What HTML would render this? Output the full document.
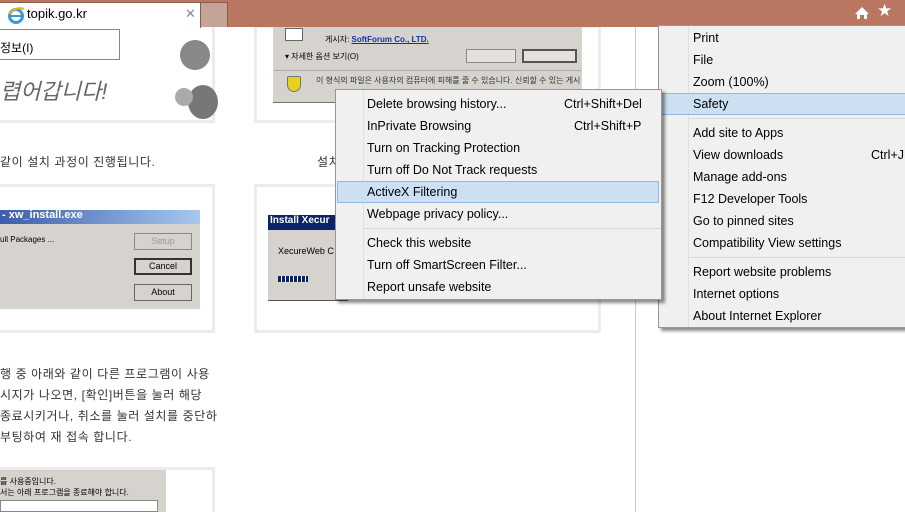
<!DOCTYPE html>
<html style="overflow:hidden;width:905px;height:512px"><head><meta charset="utf-8"><style>
*{margin:0;padding:0;box-sizing:border-box}
body{width:905px;height:512px;overflow:hidden;background:#fff;position:relative;font-family:"Segoe UI","Liberation Sans",sans-serif;font-size:12.5px;color:#000}
.a{position:absolute}
.k{font-family:"Liberation Sans","Noto Sans CJK KR",sans-serif}
.box{position:absolute;border:3px solid #ececec;background:#fff}
.menu{position:absolute;background:#f0f0f0;border:1px solid #979797;box-shadow:3px 3px 3px rgba(0,0,0,.45);z-index:20}
.it{position:absolute;left:0;right:0;height:22px;line-height:22px}
.sep{position:absolute;height:1px;background:#d7d7d7}
.hl{position:absolute;background:#cde0f3;border:1px solid #90b8e0}
.txt{font-size:12.5px;color:#333;line-height:21px;letter-spacing:0.6px}
.top{z-index:10}
</style></head><body>
<!-- content -->
<div class="box" style="left:-3px;top:-3px;width:218px;height:126px"></div>
<div class="a k" style="left:0;top:29px;width:120px;height:31px;border:1px solid #888;border-left:none;background:#fff;font-size:12px;padding:9px 0 0 0">정보(I)</div>
<div class="a k" style="left:0;top:74px;font-size:22px;color:#666;font-style:italic">렵어갑니다!</div>
<div class="a" style="left:180px;top:40px;width:30px;height:30px;border-radius:50%;background:#888"></div>
<div class="a" style="left:188px;top:85px;width:30px;height:34px;border-radius:50%;background:#777"></div>
<div class="a" style="left:175px;top:88px;width:18px;height:18px;border-radius:50%;background:#aaa"></div>
<div class="box" style="left:254px;top:25px;width:347px;height:98px"></div>
<div class="a" style="left:273px;top:27px;width:309px;height:76px;background:#d6d3ce;border-bottom:1px solid #777"></div>
<div class="a" style="left:285px;top:28px;width:18px;height:13px;background:#fff;border:1px solid #666"></div>
<div class="a k" style="left:325px;top:34px;font-size:8px">게시자: <span style="color:#13a;text-decoration:underline;font-weight:bold">SoftForum Co., LTD.</span></div>
<div class="a k" style="left:285px;top:51px;font-size:8px">▾ 자세한 옵션 보기(O)</div>
<div class="a" style="left:466px;top:49px;width:50px;height:14px;border:1px solid #888;background:#e4e1dc"></div>
<div class="a" style="left:522px;top:49px;width:55px;height:14px;border:2px solid #555;background:#e4e1dc"></div>
<div class="a" style="left:274px;top:70px;width:307px;height:1px;background:#aaa"></div>
<div class="a" style="left:287px;top:76px;width:14px;height:16px;background:#e8d020;border-radius:2px 2px 8px 8px;border:1px solid #776"></div>
<div class="a k" style="left:316px;top:75px;font-size:8px;color:#333">이 형식의 파일은 사용자의 컴퓨터에 피해를 줄 수 있습니다. 신뢰할 수 있는 게시</div>
<div class="a k txt" style="left:0;top:152px;font-size:12px">같이 설치 과정이 진행됩니다.</div>
<div class="a k txt" style="left:317px;top:152px;font-size:12px">설치</div>

<div class="box" style="left:-3px;top:184px;width:218px;height:149px"></div>
<div class="a" style="left:0;top:210px;width:200px;height:99px;background:#d6d3ce"></div>
<div class="a" style="left:0;top:210px;width:200px;height:14px;background:linear-gradient(90deg,#3a5ea8,#a8c8f0)"></div>
<div class="a" style="left:2px;top:209px;font-size:11px;color:#fff;font-weight:bold;font-family:'Liberation Sans'">- xw_install.exe</div>
<div class="a" style="left:0;top:235px;font-size:8px;font-family:'Liberation Sans'">ull Packages ...</div>
<div class="a" style="left:134px;top:233px;width:58px;height:17px;border:1px solid #888;font-size:9px;text-align:center;line-height:15px;color:#999">Setup</div>
<div class="a" style="left:134px;top:258px;width:58px;height:17px;border:2px solid #333;font-size:9px;text-align:center;line-height:13px">Cancel</div>
<div class="a" style="left:134px;top:284px;width:58px;height:17px;border:1px solid #666;font-size:9px;text-align:center;line-height:15px">About</div>

<div class="box" style="left:254px;top:184px;width:347px;height:149px"></div>
<div class="a" style="left:268px;top:215px;width:80px;height:86px;background:#d6d3ce;border-bottom:1px solid #555"></div>
<div class="a" style="left:268px;top:215px;width:80px;height:15px;background:#0a246a;color:#fff;font-size:10px;font-weight:bold;padding-left:2px;font-family:'Liberation Sans'">Install Xecur</div>
<div class="a" style="left:278px;top:246px;font-size:9px;font-family:'Liberation Sans'">XecureWeb C</div>
<div class="a" style="left:278px;top:276px;height:6px;background:repeating-linear-gradient(90deg,#0a246a 0 3px,#fff 3px 4px);width:30px"></div>

<div class="a k txt" style="left:0;top:364px;font-size:12px">행 중 아래와 같이 다른 프로그램이 사용</div>
<div class="a k txt" style="left:0;top:385px;font-size:12px">시지가 나오면, [확인]버튼을 눌러 해당</div>
<div class="a k txt" style="left:0;top:406px;font-size:12px">종료시키거나, 취소를 눌러 설치를 중단하</div>
<div class="a k txt" style="left:0;top:427px;font-size:12px">부팅하여 재 접속 합니다.</div>
<div class="box" style="left:-3px;top:467px;width:218px;height:48px"></div>
<div class="a" style="left:0;top:470px;width:166px;height:42px;background:#d6d3ce"></div>
<div class="a k" style="left:0;top:476px;font-size:8px">를 사용중입니다.<br>서는 아래 프로그램을 종료해야 합니다.</div>
<div class="a" style="left:0;top:500px;width:158px;height:12px;background:#fff;border:1px solid #888"></div>

<div class="a" style="left:635px;top:27px;width:1px;height:485px;background:#ccc"></div>

<!-- title bar -->
<div class="a top" style="left:0;top:0;width:905px;height:27px;background:#b97762"></div>
<div class="a top" style="left:0;top:2px;width:201px;height:26px;background:#fff;border:1px solid #8a5a4a;border-bottom:none;border-left:none"></div>
<div class="a top" style="left:201px;top:2px;width:27px;height:25px;background:#c4a399;border:1px solid #8a5a4a;border-bottom:none;border-left:none"></div>
<svg class="a top" style="left:7px;top:6px" width="18" height="18" viewBox="0 0 18 18"><circle cx="9" cy="10" r="6.5" fill="none" stroke="#3a9ad9" stroke-width="3"/><rect x="4" y="9" width="11" height="2" fill="#3a9ad9"/><path d="M2 8 Q9 0 17 3" stroke="#e8b320" stroke-width="2" fill="none"/></svg>
<div class="a top" style="left:27px;top:6px;font-size:13px">topik.go.kr</div>
<div class="a top" style="left:185px;top:6px;font-size:13px;color:#888">✕</div>
<svg class="a top" style="left:854px;top:6px" width="16" height="14" viewBox="0 0 16 14"><path d="M8 1 L15 8 H13 V13 H10 V9 H6 V13 H3 V8 H1 Z" fill="#fff"/></svg>
<div class="a top" style="left:877px;top:1px;font-size:17px;color:#fff">★</div>

<!-- main menu -->
<div class="menu" style="left:658px;top:25px;width:250px;height:303px">
<div class="a" style="left:29px;top:0;width:1px;height:301px;background:#e0e0e0"></div>
<div class="hl" style="left:0;top:67px;width:250px;height:22px"></div>
<div class="sep" style="left:30px;top:92px;width:220px"></div>
<div class="sep" style="left:30px;top:231px;width:220px"></div>
<div class="it" style="top:1px;left:34px">Print</div>
<div class="it" style="top:23px;left:34px">File</div>
<div class="it" style="top:45px;left:34px">Zoom (100%)</div>
<div class="it" style="top:67px;left:34px">Safety</div>
<div class="it" style="top:96px;left:34px">Add site to Apps</div>
<div class="it" style="top:118px;left:34px">View downloads<span style="position:absolute;left:178px">Ctrl+J</span></div>
<div class="it" style="top:140px;left:34px">Manage add-ons</div>
<div class="it" style="top:162px;left:34px">F12 Developer Tools</div>
<div class="it" style="top:184px;left:34px">Go to pinned sites</div>
<div class="it" style="top:206px;left:34px">Compatibility View settings</div>
<div class="it" style="top:235px;left:34px">Report website problems</div>
<div class="it" style="top:257px;left:34px">Internet options</div>
<div class="it" style="top:279px;left:34px">About Internet Explorer</div>
</div>

<!-- submenu -->
<div class="menu" style="left:335px;top:89px;width:327px;height:211px">
<div class="a" style="left:27px;top:0;width:1px;height:209px;background:#e0e0e0"></div>
<div class="hl" style="left:1px;top:91px;width:322px;height:22px"></div>
<div class="sep" style="left:28px;top:138px;width:297px"></div>
<div class="it" style="top:3px;left:31px">Delete browsing history...<span style="position:absolute;left:197px">Ctrl+Shift+Del</span></div>
<div class="it" style="top:25px;left:31px">InPrivate Browsing<span style="position:absolute;left:207px">Ctrl+Shift+P</span></div>
<div class="it" style="top:47px;left:31px">Turn on Tracking Protection</div>
<div class="it" style="top:69px;left:31px">Turn off Do Not Track requests</div>
<div class="it" style="top:91px;left:31px">ActiveX Filtering</div>
<div class="it" style="top:113px;left:31px">Webpage privacy policy...</div>
<div class="it" style="top:142px;left:31px">Check this website</div>
<div class="it" style="top:164px;left:31px">Turn off SmartScreen Filter...</div>
<div class="it" style="top:186px;left:31px">Report unsafe website</div>
</div>
</body></html>
